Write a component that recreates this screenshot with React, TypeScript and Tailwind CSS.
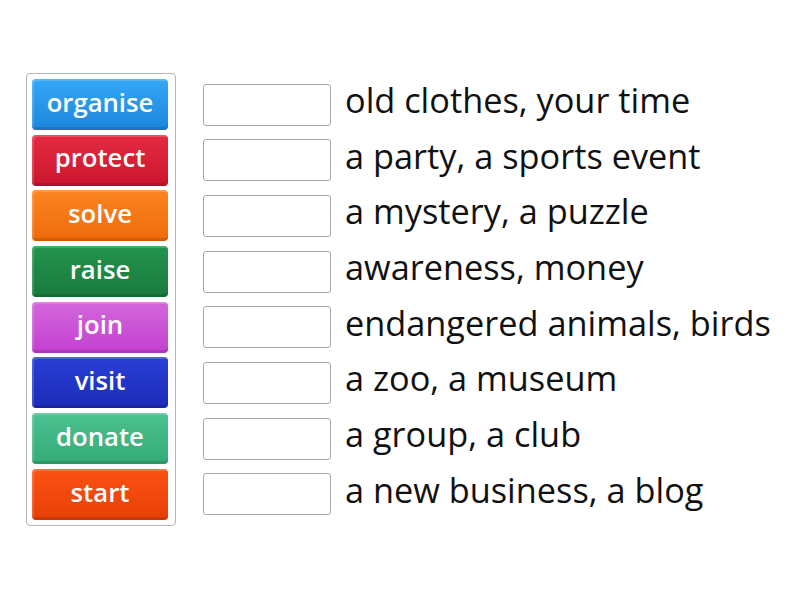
const words = [
  { label: "organise", cls: "bg-gradient-to-b from-[#35a7f5] to-[#1c86dc]" },
  { label: "protect", cls: "bg-gradient-to-b from-[#e52a42] to-[#c9152c]" },
  { label: "solve", cls: "bg-gradient-to-b from-[#fb8520] to-[#ee6a08]" },
  { label: "raise", cls: "bg-gradient-to-b from-[#22944c] to-[#1a7a3e]" },
  { label: "join", cls: "bg-gradient-to-b from-[#d466dc] to-[#c23fd0]" },
  { label: "visit", cls: "bg-gradient-to-b from-[#2a3ed6] to-[#1c2cb8]" },
  { label: "donate", cls: "bg-gradient-to-b from-[#4cc290] to-[#34aa76]" },
  { label: "start", cls: "bg-gradient-to-b from-[#fb5214] to-[#e63e06]" },
];

const clues = [
  "old clothes, your time",
  "a party, a sports event",
  "a mystery, a puzzle",
  "awareness, money",
  "endangered animals, birds",
  "a zoo, a museum",
  "a group, a club",
  "a new business, a blog",
];

export default function App() {
  return (
    <div className="h-[600px] w-[800px] bg-white font-['Open_Sans',sans-serif]">
      <div className="flex pl-[26px] pt-[73px]">
        <div className="flex w-[150px] flex-col gap-[4.7px] rounded-[4px] border border-[#b4b4b4] py-[5px] pl-[5px]">
          {words.map((w) => (
            <div
              key={w.label}
              className={`flex h-[51px] w-[136px] items-center justify-center rounded-[4px] pb-[3px] text-[25.7px] font-semibold text-white shadow-[inset_2px_2px_0_rgba(255,255,255,0.18),inset_0_-3px_0_rgba(0,0,0,0.12)] ${w.cls}`}
            >
              {w.label}
            </div>
          ))}
        </div>
        <div className="ml-[27px] flex flex-col gap-[4.7px] pt-[6px]">
          {clues.map((c) => (
            <div key={c} className="flex h-[51px] items-center">
              <div className="h-[42px] w-[128px] rounded-[3px] border border-[#a8a8a8] bg-white" />
              <div className="ml-[14px] whitespace-nowrap pb-[9px] text-[34.3px] leading-none text-[#111111]">
                {c}
              </div>
            </div>
          ))}
        </div>
      </div>
    </div>
  );
}
